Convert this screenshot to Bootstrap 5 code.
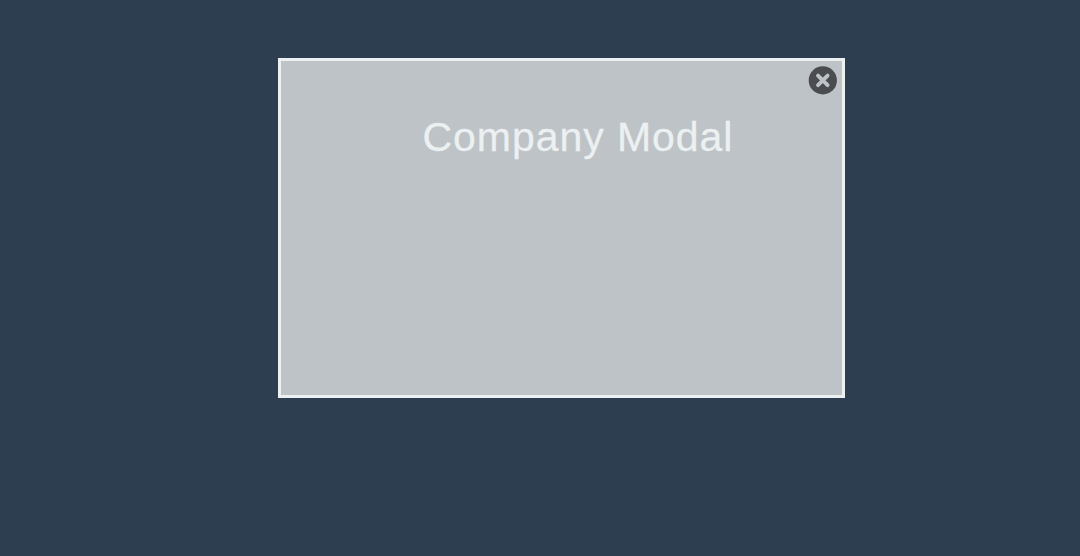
<!DOCTYPE html>
<html lang="en">
<head>
<meta charset="utf-8">
<meta name="viewport" content="width=device-width, initial-scale=1">
<title>Company Modal</title>
<link rel="stylesheet" href="https://cdn.jsdelivr.net/npm/bootstrap@5.3.0/dist/css/bootstrap.min.css">
<style>
body { background: #2d3e50; font-family: "Liberation Sans", Arial, sans-serif; overflow: hidden; }
.stage { padding-top: 58px; padding-left: 278px; }
.company-dialog { width: 567px; height: 340px; background: #bdc3c7; border: 3px solid #ecf0f1; }
.company-title { font-size: 41px; line-height: 50px; letter-spacing: .95px; color: #ecf0f1; -webkit-text-stroke: .3px #ecf0f1; padding: 51px 0 0 141.5px; }
.close-btn { top: 5px; right: 5px; width: 29px; height: 29px; }
</style>
</head>
<body>
<main class="stage vh-100">
  <section class="company-dialog position-relative" role="dialog" aria-labelledby="dialogTitle">
    <h1 id="dialogTitle" class="company-title fw-normal m-0 text-nowrap">Company Modal</h1>
    <button type="button" class="close-btn btn p-0 border-0 position-absolute d-flex" aria-label="Close">
      <svg width="29" height="29" viewBox="0 0 29 29" aria-hidden="true"><circle cx="14.8" cy="14.4" r="14.1" fill="#4b4c50"/><path d="M10 9.6l9.6 9.6M19.6 9.6L10 19.2" stroke="#bdc3c7" stroke-width="3.8" stroke-linecap="round"/></svg>
    </button>
  </section>
</main>
<script src="https://cdn.jsdelivr.net/npm/bootstrap@5.3.0/dist/js/bootstrap.bundle.min.js"></script>
</body>
</html>
